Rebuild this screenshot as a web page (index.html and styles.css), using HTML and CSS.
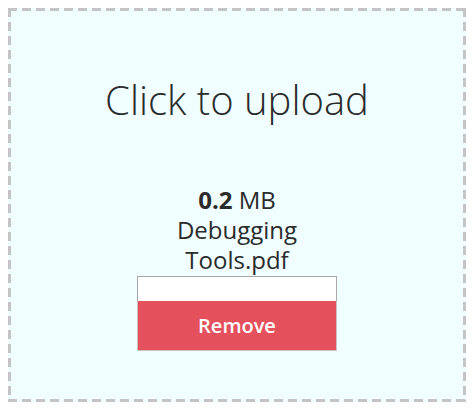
FILE: index.html
```html
<!DOCTYPE html>
<html>
<head>
<meta charset="utf-8">
<link rel="stylesheet" href="styles.css">
</head>
<body>
<div class="dropzone">
  <div class="title">Click to upload</div>
  <div class="file">
    <div class="size"><strong>0.2</strong> MB</div>
    <div class="name">Debugging Tools.pdf</div>
    <div class="progress"></div>
    <button class="remove">Remove</button>
  </div>
</div>
</body>
</html>
```

FILE: styles.css
```css
html, body {
  margin: 0;
  padding: 0;
  background: #ffffff;
}
body {
  padding: 8px;
  font-family: "Open Sans", sans-serif;
}
.dropzone {
  box-sizing: border-box;
  width: 458px;
  height: 394px;
  background:
    repeating-linear-gradient(90deg, #c4c4c4 0 9px, transparent 9px 14px) left top / 100% 3px no-repeat,
    repeating-linear-gradient(90deg, #c4c4c4 0 9px, transparent 9px 14px) left bottom / 100% 3px no-repeat,
    repeating-linear-gradient(180deg, #c4c4c4 0 9px, transparent 9px 14px) left top / 3px 100% no-repeat,
    repeating-linear-gradient(180deg, #c4c4c4 0 9px, transparent 9px 14px) right top / 3px 100% no-repeat,
    #f0feff;
  display: flex;
  flex-direction: column;
  align-items: center;
}
.title {
  margin-top: 64px;
  font-size: 40px;
  font-weight: 300;
  color: #2b2b2b;
  line-height: 56px;
}
.file {
  margin-top: 57px;
  display: flex;
  flex-direction: column;
  align-items: center;
  width: 200px;
}
.size, .name {
  font-size: 24px;
  line-height: 30px;
  color: #2b2b2b;
  text-align: center;
}
.size strong {
  font-weight: 700;
}
.name {
  width: 150px;
}
.progress {
  box-sizing: border-box;
  width: 200px;
  height: 25px;
  margin-top: 1px;
  background: #ffffff;
  border: 1px solid #a8a8a8;
  border-bottom: none;
}
.remove {
  box-sizing: border-box;
  width: 200px;
  height: 50px;
  border: 1px solid #c9c0c0;
  border-top: none;
  background: #e5505d;
  color: #ffffff;
  font-family: "Open Sans", sans-serif;
  font-size: 20px;
  font-weight: 600;
  padding: 0;
}
```
